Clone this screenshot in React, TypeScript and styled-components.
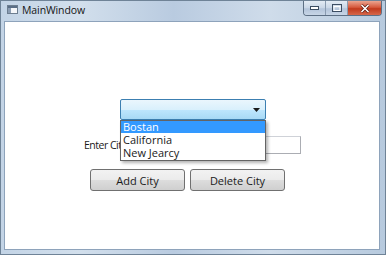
import React from "react";
import styled, { createGlobalStyle } from "styled-components";

const GlobalStyle = createGlobalStyle`
  html, body {
    margin: 0;
    padding: 0;
    background: #ffffff;
  }
  body {
    font-family: "Open Sans", "Noto Sans", "Liberation Sans", sans-serif;
  }
`;

const Window = styled.div`
  width: 386px;
  height: 255px;
  box-sizing: border-box;
  display: flex;
  flex-direction: column;
  background: linear-gradient(
      90deg,
      #c3d4e6 0%,
      #d2dfec 20%,
      #b9cbe0 45%,
      #cfdcea 70%,
      #b7cade 100%
    );
  border: 1px solid #6f8397;
  overflow: hidden;
`;

const TitleBar = styled.div`
  height: 20px;
  display: flex;
  align-items: flex-start;
  justify-content: space-between;
  padding-left: 6px;
`;

const Caption = styled.div`
  display: flex;
  align-items: center;
  gap: 4px;
  height: 17px;
  font-size: 10.5px;
  color: #151515;
  letter-spacing: -0.1px;
`;

const CaptionButtons = styled.div`
  display: flex;
  flex-shrink: 0;
  margin-right: 3px;
  border: 1px solid #5d6f84;
  border-top: none;
  border-radius: 0 0 4px 4px;
  overflow: hidden;
  height: 14px;
`;

const CapButton = styled.div`
  width: 21px;
  height: 14px;
  display: flex;
  align-items: center;
  justify-content: center;
  background: linear-gradient(#e3ebf4 0%, #c9d6e6 50%, #b3c4da 55%, #c7d5e6 100%);
  border-right: 1px solid #8a9bb0;
`;

const CloseButton = styled.div`
  width: 33px;
  height: 14px;
  display: flex;
  align-items: center;
  justify-content: center;
  background: #cd4a2f;
  background-image: linear-gradient(#eba590 0%, #d65a3e 45%, #c13a1d 55%, #d6674a 100%);
`;

const Client = styled.div`
  flex: 1;
  margin: 0 5px 4px 3px;
  background: #ffffff;
  border: 1px solid #8ea3bb;
  position: relative;
  font-family: "Open Sans", "Noto Sans", sans-serif;
  font-size: 11px;
  color: #1a1a1a;
`;

const Content = styled.div`
  display: flex;
  flex-direction: column;
  padding-top: 77px;
`;

const Row = styled.div<{ $left: number; $top?: number; $gap?: number }>`
  display: flex;
  align-items: center;
  margin-left: ${(p) => p.$left}px;
  margin-top: ${(p) => p.$top ?? 0}px;
  gap: ${(p) => p.$gap ?? 0}px;
`;

const ComboWrap = styled.div`
  position: relative;
`;

const Combo = styled.div`
  width: 139px;
  height: 19px;
  border: 1px solid #3c7fb1;
  border-radius: 2px;
  background: linear-gradient(#eaf6fd 0%, #d9f0fc 50%, #bee6fd 51%, #a7d9f5 100%);
  display: flex;
  align-items: center;
  justify-content: flex-end;
  padding-right: 5px;
  box-sizing: content-box;
`;

const Popup = styled.div`
  position: absolute;
  left: 0;
  top: 21px;
  width: 144px;
  border: 1px solid #646464;
  background: #ffffff;
  box-shadow: 2px 2px 3px rgba(0, 0, 0, 0.3);
  z-index: 2;
  padding-bottom: 1px;
`;

const Item = styled.div<{ $selected?: boolean }>`
  height: 12px;
  line-height: 12px;
  padding-left: 2px;
  font-size: 11px;
  color: ${(p) => (p.$selected ? "#ffffff" : "#1a1a1a")};
  background: ${(p) => (p.$selected ? "#3399ff" : "transparent")};
  & + & {
    margin-top: 1px;
  }
`;

const Label = styled.span`
  font-size: 10.5px;
  letter-spacing: -0.5px;
  white-space: nowrap;
  margin-right: 2px;
`;

const TextBox = styled.div`
  width: 171px;
  height: 16px;
  border: 1px solid #abadb3;
  border-top-color: #cfd2d8;
  background: #fff;
`;

const Button = styled.div`
  width: 93px;
  height: 20px;
  border: 1px solid #707070;
  border-radius: 3px;
  background: linear-gradient(#f2f2f2 0%, #ebebeb 50%, #dddddd 51%, #cfcfcf 100%);
  display: flex;
  align-items: center;
  justify-content: center;
  font-size: 11px;
  color: #1a1a1a;
`;

const App: React.FC = () => {
  return (
    <>
      <GlobalStyle />
      <Window>
        <TitleBar>
          <Caption>
            <svg width="11" height="9" viewBox="0 0 11 9">
              <rect x="0.5" y="0.5" width="10" height="8" fill="#f4f6f9" stroke="#6d7e90" />
              <rect x="1" y="1" width="9" height="2" fill="#5a6e86" />
              <rect x="1" y="3" width="3" height="5" fill="#8b9db3" />
            </svg>
            <span>MainWindow</span>
          </Caption>
          <CaptionButtons>
            <CapButton>
              <svg width="9" height="4" viewBox="0 0 9 4">
                <rect x="0.5" y="0.5" width="8" height="3" fill="#ffffff" stroke="#3d4e63" />
              </svg>
            </CapButton>
            <CapButton>
              <svg width="10" height="8" viewBox="0 0 10 8">
                <rect x="0.5" y="0.5" width="9" height="7" fill="none" stroke="#3d4e63" />
                <rect x="2" y="2.5" width="6" height="4" fill="none" stroke="#ffffff" />
              </svg>
            </CapButton>
            <CloseButton>
              <svg width="10" height="9" viewBox="0 0 10 9">
                <path d="M1.5 1 L8.5 8 M8.5 1 L1.5 8" stroke="#5b1a10" strokeWidth="3" />
                <path d="M1.5 1 L8.5 8 M8.5 1 L1.5 8" stroke="#ffffff" strokeWidth="1.6" />
              </svg>
            </CloseButton>
          </CaptionButtons>
        </TitleBar>
        <Client>
          <Content>
            <Row $left={115}>
              <ComboWrap>
                <Combo>
                  <svg width="7" height="4" viewBox="0 0 7 4">
                    <path d="M0 0 L7 0 L3.5 4 Z" fill="#1a1a1a" />
                  </svg>
                </Combo>
                <Popup>
                  <Item $selected>Bostan</Item>
                  <Item>California</Item>
                  <Item>New Jearcy</Item>
                </Popup>
              </ComboWrap>
            </Row>
            <Row $left={79} $top={16}>
              <Label>Enter City</Label>
              <TextBox />
            </Row>
            <Row $left={85} $top={15} $gap={5}>
              <Button>Add City</Button>
              <Button>Delete City</Button>
            </Row>
          </Content>
        </Client>
      </Window>
    </>
  );
};

export default App;
